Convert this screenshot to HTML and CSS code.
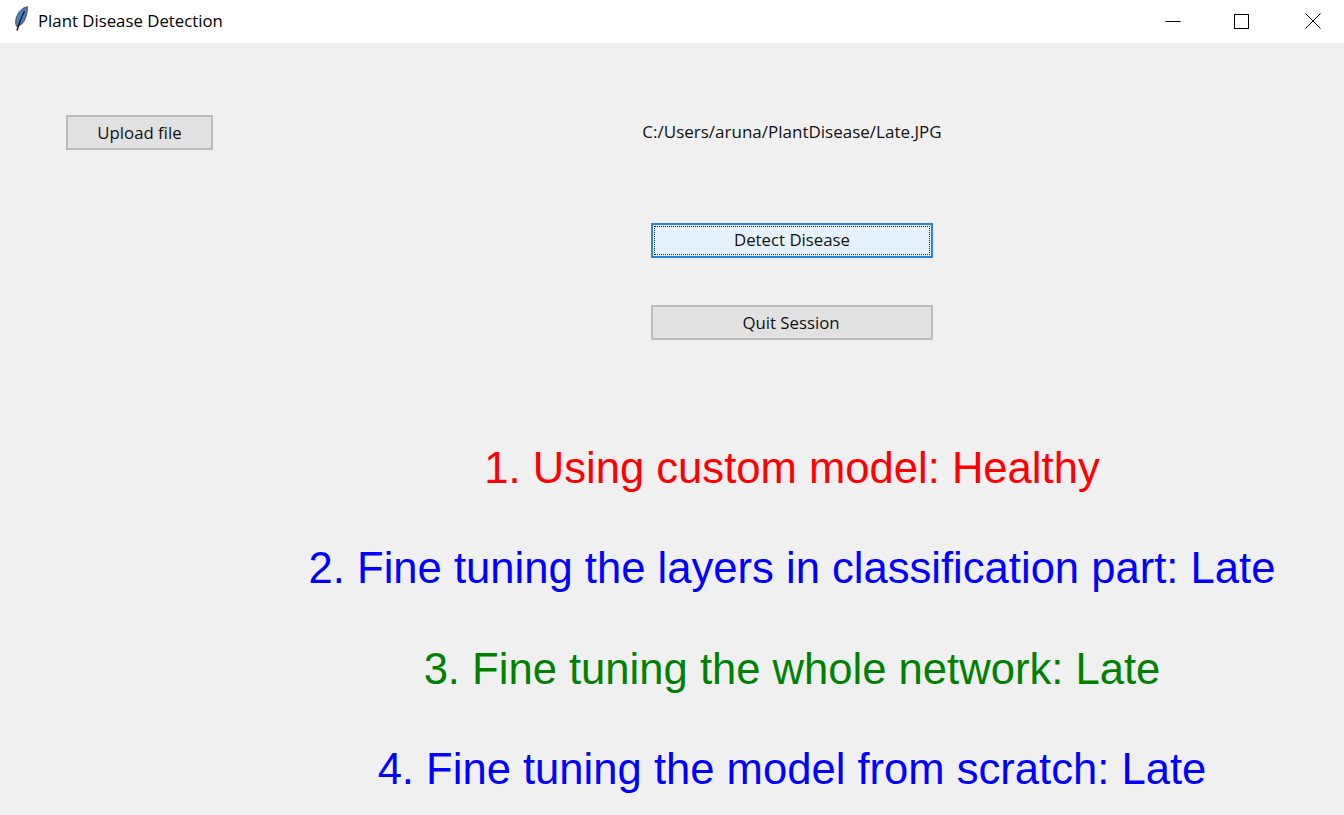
FILE: index.html
```html
<!DOCTYPE html>
<html lang="en">
<head>
    <meta charset="UTF-8">
    <title>Plant Disease Detection</title>
    <link rel="stylesheet" href="styles.css">
</head>
<body>

    <div class="titlebar">
        <svg class="app-icon" width="16" height="26" viewBox="0 0 16 26">
            <path d="M14.5 1 C10 1.5 5 6 3.5 11.5 C2.5 15 2.5 18 3.5 20 C8 19.5 11.5 15 13 10 C14 6.5 14.5 3.5 14.5 1 Z" fill="#4384d6" stroke="#5a5f66" stroke-width="1.3"/>
            <path d="M11.5 5 C9 10 6.5 15 4 24.5" fill="none" stroke="#15191f" stroke-width="1.5"/>
        </svg>
        <span class="title">Plant Disease Detection</span>
        <div class="win-buttons">
            <svg width="16" height="16" viewBox="0 0 16 16"><path d="M0.5 8.5 H15.5" stroke="#000" fill="none"/></svg>
            <svg width="16" height="16" viewBox="0 0 16 16"><rect x="0.5" y="1.5" width="14" height="14" stroke="#000" fill="none"/></svg>
            <svg class="close" width="16" height="16" viewBox="0 0 16 16"><path d="M0.5 0.5 L15.5 15.5 M15.5 0.5 L0.5 15.5" stroke="#000" fill="none"/></svg>
        </div>
    </div>

    <div class="wrap">
        <div class="left">
            <button class="btn upload">Upload file</button>
        </div>
        <div class="right">
            <div class="path">C:/Users/aruna/PlantDisease/Late.JPG</div>
            <button class="btn wide active"><span class="focus">Detect Disease</span></button>
            <button class="btn wide quit">Quit Session</button>
            <ul class="results">
                <li class="red">1. Using custom model: Healthy</li>
                <li class="blue">2. Fine tuning the layers in classification part: Late</li>
                <li class="green">3. Fine tuning the whole network: Late</li>
                <li class="blue">4. Fine tuning the model from scratch: Late</li>
            </ul>
        </div>
    </div>

</body>
</html>
```

FILE: styles.css
```css
html, body {
    margin: 0;
    height: 100%;
    overflow: hidden;
}
body {
    background-color: #f0f0f0;
    font-family: "Open Sans", "Noto Sans", sans-serif;
    color: #111;
}
.titlebar {
    display: flex;
    align-items: center;
    height: 43px;
    padding-left: 13px;
    background-color: #fff;
}
.app-icon {
    flex: none;
    margin-bottom: 5px;
}
.title {
    margin-left: 9px;
    margin-bottom: 3px;
    font-size: 16.8px;
    color: #000;
}
.win-buttons {
    display: flex;
    gap: 53px;
    margin-left: auto;
    padding-right: 23px;
    margin-bottom: 2px;
}
.close {
    margin-left: 2px;
}
.wrap {
    display: flex;
    padding-top: 72px;
}
.left {
    width: 308px;
    flex: none;
}
.right {
    display: flex;
    flex-direction: column;
    align-items: center;
    width: 968px;
}
.btn {
    display: block;
    height: 35px;
    padding: 0 0 1px;
    border: 2px solid #bcbcbc;
    background-color: #e1e1e1;
    font-family: inherit;
    font-size: 16.8px;
    font-weight: 500;
    color: #111;
}
.upload {
    width: 147px;
    margin-left: 66px;
}
.path {
    height: 35px;
    line-height: 33px;
    font-size: 17px;
}
.wide {
    width: 282px;
}
.active {
    margin-top: 73px;
    padding: 1px;
    border-color: #2a86d8;
    background-color: #e5f1fb;
}
.focus {
    display: block;
    height: 100%;
    line-height: 26px;
    box-sizing: border-box;
    border: 1px dotted #222;
}
.quit {
    margin-top: 47px;
    padding-right: 2px;
}
.results {
    margin: 104px 0 0;
    padding: 0;
    list-style: none;
    text-align: center;
    font-family: "Liberation Sans", Arial, sans-serif;
    font-size: 43.6px;
    line-height: 48px;
}
.results li {
    margin-bottom: 52.3px;
    white-space: nowrap;
}
.red {
    color: #ff0000;
}
.blue {
    color: #0000ff;
}
.green {
    color: #008000;
}
```
